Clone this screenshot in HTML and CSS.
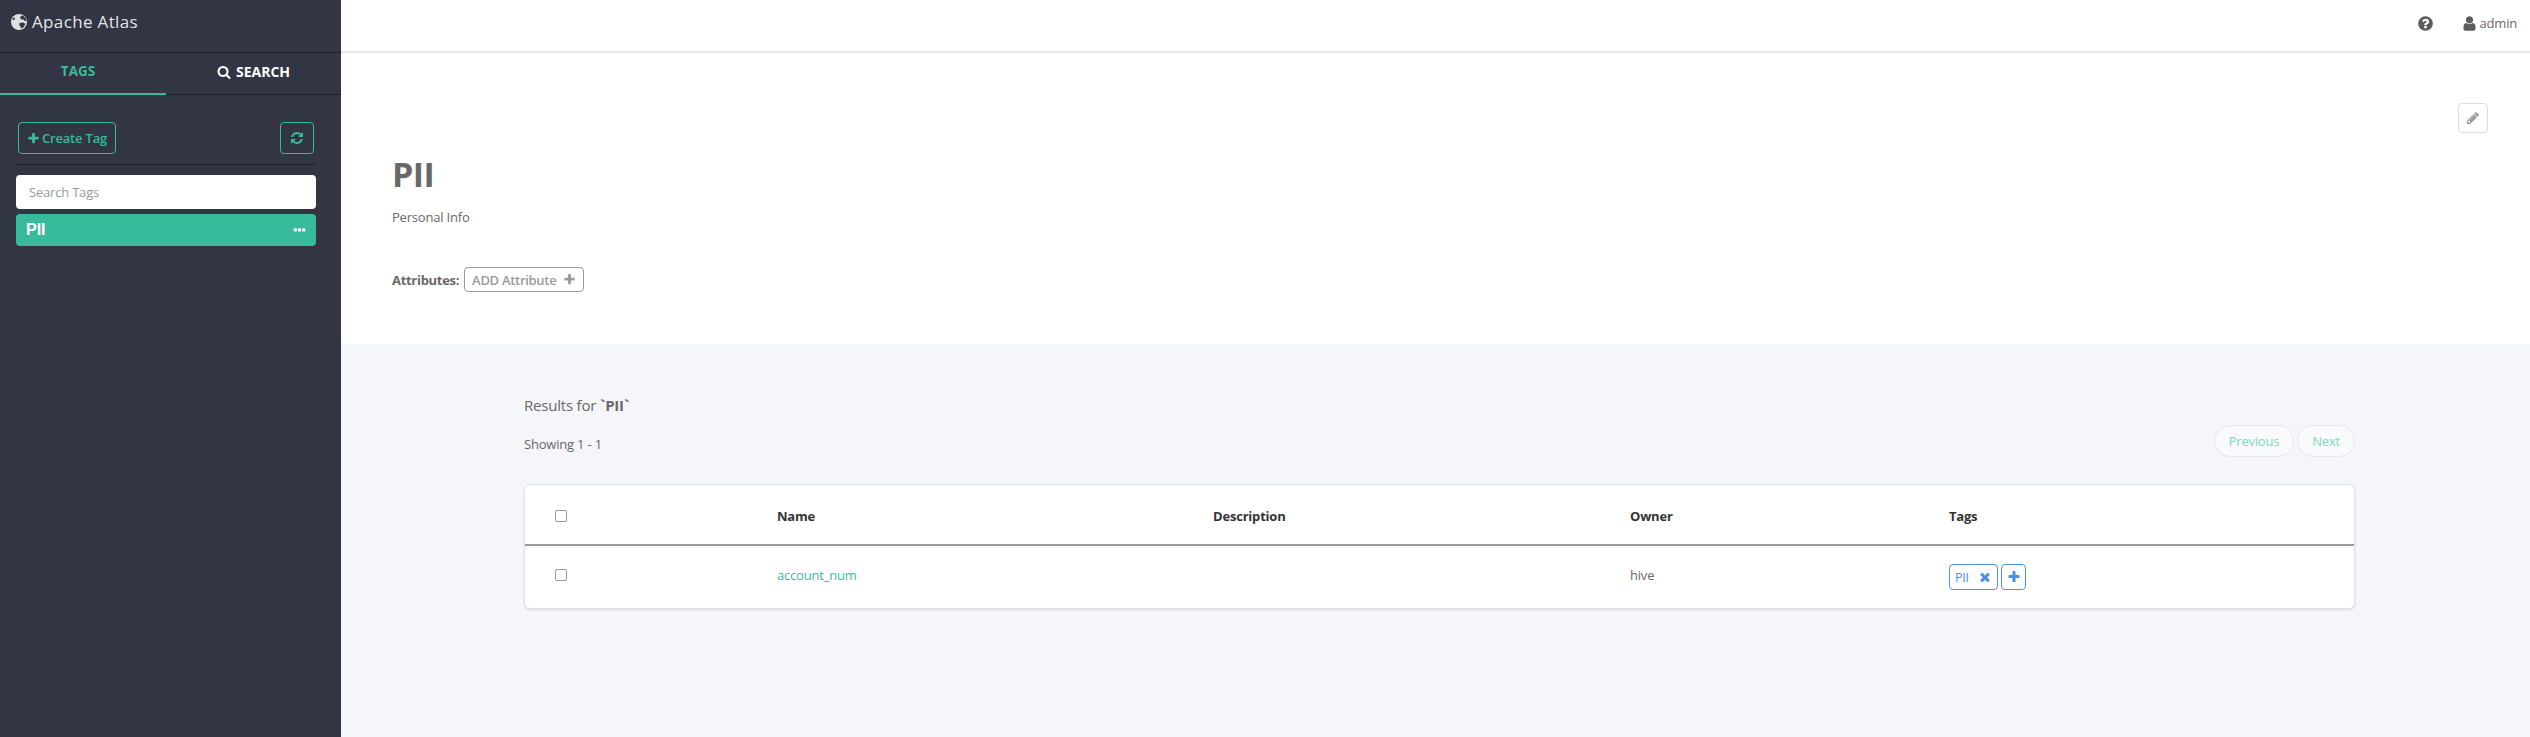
FILE: index.html
```html
<!DOCTYPE html>
<html lang="en">
<head>
  <meta charset="UTF-8">
  <title>Apache Atlas</title>
  <link rel="stylesheet" href="styles.css">
</head>
<body>
  <svg class="defs" width="0" height="0">
    <symbol id="i-search" viewBox="0 0 1792 1792"><path d="M1216 832q0-185-131.5-316.5t-316.5-131.5-316.5 131.5-131.5 316.5 131.5 316.5 316.5 131.5 316.5-131.5 131.5-316.5zm512 832q0 52-38 90t-90 38q-54 0-90-38l-343-342q-179 124-399 124-143 0-273.5-55.5t-225-150-150-225-55.5-273.5 55.5-273.5 150-225 225-150 273.5-55.5 273.5 55.5 225 150 150 225 55.5 273.5q0 220-124 399l343 343q37 37 37 90z"/></symbol>
    <symbol id="i-plus" viewBox="0 0 1792 1792"><path d="M1600 736v192q0 40-28 68t-68 28h-416v416q0 40-28 68t-68 28h-192q-40 0-68-28t-28-68v-416h-416q-40 0-68-28t-28-68v-192q0-40 28-68t68-28h416v-416q0-40 28-68t68-28h192q40 0 68 28t28 68v416h416q40 0 68 28t28 68z"/></symbol>
    <symbol id="i-times" viewBox="0 0 1792 1792"><path d="M1490 1322q0 40-28 68l-136 136q-28 28-68 28t-68-28l-294-294-294 294q-28 28-68 28t-68-28l-136-136q-28-28-28-68t28-68l294-294-294-294q-28-28-28-68t28-68l136-136q28-28 68-28t68 28l294 294 294-294q28-28 68-28t68 28l136 136q28 28 28 68t-28 68l-294 294 294 294q28 28 28 68z"/></symbol>
  </svg>

  <div class="app">
    <!-- sidebar -->
    <aside class="sidebar">
      <div class="brand">
        <svg class="globe" viewBox="0 0 16 16">
          <circle cx="8" cy="8" r="8" fill="#dfdfe2"/>
          <path d="M9.500 2.500l2.500-.9 2.600 2.600 1 3-2-.4-1.600-1.600-2 .2-.8-1.600zM8.600 9l3.400-.6 2.400 1.400-1.600 3.200-2.800 1.600-.8-2.600-1-1.200zM1 5l2.400-1.800.6 1.600-1.200 1.400z" fill="#323544"/>
        </svg>
        <span>Apache Atlas</span>
      </div>
      <nav class="tabs">
        <a class="tab active">TAGS</a>
        <a class="tab"><svg class="ico"><use href="#i-search"/></svg> SEARCH</a>
      </nav>
      <div class="side-body">
        <div class="side-actions">
          <button class="btn-outline"><svg class="ico"><use href="#i-plus"/></svg>Create Tag</button>
          <button class="btn-outline btn-refresh">
            <svg class="ico" viewBox="0 0 1792 1792"><path d="M1639 1056q0 5-1 7-64 268-268 434.5t-478 166.5q-146 0-282.5-55t-243.500-157l-129 129q-19 19-45 19t-45-19-19-45v-448q0-26 19-45t45-19h448q26 0 45 19t19 45-19 45l-137 137q71 66 161 102t187 36q134 0 250-65t186-179q11-17 53-117 8-23 30-23h192q13 0 22.500 9.500t9.500 22.500zm25-800v448q0 26-19 45t-45 19h-448q-26 0-45-19t-19-45 19-45l138-138q-148-137-349-137-134 0-250 65t-186 179q-11 17-53 117-8 23-30 23h-199q-13 0-22.500-9.500t-9.500-22.500v-7q65-268 270-434.500t480-166.500q146 0 284 55.500t245 156.500l130-129q19-19 45-19t45 19 19 45z"/></svg>
          </button>
        </div>
        <input class="side-search" type="text" placeholder="Search Tags">
        <div class="tag-row">
          <span>PII</span>
          <svg class="dots" viewBox="0 0 1792 1792"><path d="M576 736v192q0 40-28 68t-68 28h-192q-40 0-68-28t-28-68v-192q0-40 28-68t68-28h192q40 0 68 28t28 68zm512 0v192q0 40-28 68t-68 28h-192q-40 0-68-28t-28-68v-192q0-40 28-68t68-28h192q40 0 68 28t28 68zm512 0v192q0 40-28 68t-68 28h-192q-40 0-68-28t-28-68v-192q0-40 28-68t68-28h192q40 0 68 28t28 68z"/></svg>
        </div>
      </div>
    </aside>

    <main class="main">
      <header class="topbar">
        <svg class="top-ico" viewBox="0 0 1792 1792"><path d="M1024 1376v-192q0-14-9-23t-23-9h-192q-14 0-23 9t-9 23v192q0 14 9 23t23 9h192q14 0 23-9t9-23zm256-672q0-88-55.500-163t-138.500-116-170-41q-243 0-371 213-15 24 8 42l132 100q7 6 19 6 16 0 25-12 53-68 86-92 34-24 86-24 48 0 85.500 26t37.500 59q0 38-20 61t-68 45q-63 28-115.500 86.500t-52.500 125.500v36q0 14 9 23t23 9h192q14 0 23-9t9-23q0-19 21.500-49.500t54.500-49.500q32-18 49-28.500t46-35 44.500-48 28-60.500 12.500-81zm384 192q0 209-103 385.500t-279.500 279.500-385.500 103-385.500-103-279.500-279.500-103-385.500 103-385.500 279.500-279.500 385.500-103 385.500 103 279.500 279.500 103 385.500z"/></svg>
        <span class="user">
          <svg class="top-ico" viewBox="0 0 1792 1792"><path d="M1536 1399q0 109-62.500 187t-150.500 78h-854q-88 0-150.500-78t-62.500-187q0-85 8.500-160.500t31.500-152 58.500-131 94-89 134.500-34.500q131 128 313 128t313-128q76 0 134.500 34.500t94 89 58.500 131 31.500 152 8.500 160.500zm-256-887q0 159-112.500 271.500t-271.500 112.500-271.500-112.500-112.500-271.500 112.500-271.500 271.500-112.500 271.500 112.500 112.500 271.500z"/></svg>
          admin
        </span>
      </header>

      <section class="tag-detail">
        <button class="btn-edit">
          <svg viewBox="0 0 1792 1792"><path d="M491 1536l91-91-235-235-91 91v107h128v128h107zm523-928q0-22-22-22-10 0-17 7l-542 542q-7 7-7 17 0 22 22 22 10 0 17-7l542-542q7-7 7-17zm-54-192l416 416-832 832h-416v-416zm683 96q0 53-37 90l-166 166-416-416 166-165q36-38 90-38 53 0 91 38l235 234q37 39 37 91z"/></svg>
        </button>
        <h1>PII</h1>
        <p class="desc">Personal Info</p>
        <div class="attrs">
          <strong>Attributes:</strong>
          <button class="btn-attr">ADD Attribute <svg class="ico"><use href="#i-plus"/></svg></button>
        </div>
      </section>

      <section class="results">
        <h2 class="res-title">Results for <b>`PII`</b></h2>
        <div class="res-bar">
          <span>Showing 1 - 1</span>
          <div class="pager">
            <button>Previous</button>
            <button>Next</button>
          </div>
        </div>
        <div class="res-table">
          <div class="tr th">
            <div class="td-check"><i class="check"></i></div>
            <div>Name</div>
            <div>Description</div>
            <div>Owner</div>
            <div>Tags</div>
          </div>
          <div class="tr row">
            <div class="td-check"><i class="check"></i></div>
            <div><a class="link">account_num</a></div>
            <div></div>
            <div>hive</div>
            <div class="tags">
              <span class="chip">PII <svg class="ico"><use href="#i-times"/></svg></span>
              <span class="chip chip-add"><svg class="ico"><use href="#i-plus"/></svg></span>
            </div>
          </div>
        </div>
      </section>
    </main>
  </div>
</body>
</html>
```

FILE: styles.css
```css
:root {
  --dark: #323544;
  --line: #1f2029;
  --green: #38bb9b;
  --blue: #4a90e2;
  --text: #686868;
}
* {box-sizing: border-box;margin:0;padding:0;}
html,body {height:100%;}
body {font-family:"Open Sans",sans-serif;font-size:13px;letter-spacing:-0.2px;color:var(--text);background:#f5f6fa;overflow:hidden;}
button {font-family:inherit;letter-spacing:inherit;background:none;cursor:pointer;}
.defs {position:absolute;}
.ico {width:1em;height:1em;fill:currentColor;}

.app {display:flex;height:737px;}

/* sidebar */
.sidebar {width:341px;flex:none;background:var(--dark);color:#fff;}
.brand {height:53px;padding:0 0 9px 11px;display:flex;align-items:center;gap:5px;border-bottom:1px solid var(--line);font-size:17px;font-weight:500;letter-spacing:0.35px;color:#e4e4e6;}
.globe {width:16px;height:16px;}
.tabs {display:flex;height:42px;border-bottom:1px solid var(--line);}
.tab {flex:1;display:flex;align-items:center;justify-content:center;gap:5px;font-size:14px;font-weight:700;letter-spacing:0;padding-bottom:4px;}
.tab:first-child {flex:none;width:166px;}
.tab.active {color:var(--green);font-size:13.500px;padding-right:10px;border-bottom:2px solid var(--green);margin-bottom:-1px;}
.side-body {padding:27px 25px 0 16px;}
.side-actions {display:flex;justify-content:space-between;padding:0 2px 10px 2px;margin:0 -9px 10px 0;border-bottom:1px solid var(--line);width:300px;}
.btn-outline {height:32px;padding:0 8px;border:1px solid var(--green);border-radius:4px;color:var(--green);font-size:13px;font-weight:600;display:flex;align-items:center;gap:2px;}
.btn-refresh {width:34px;padding:0;justify-content:center;font-size:14px;}
.side-search {display:block;width:300px;height:34px;border:0;border-radius:4px;padding:0 13px;font-family:inherit;font-size:13px;letter-spacing:inherit;}
.side-search::placeholder {color:#999;}
.tag-row {width:300px;height:32px;margin-top:5px;border-radius:4px;background:var(--green);padding:0 9px 0 10px;display:flex;align-items:center;justify-content:space-between;font-family:"Liberation Sans",sans-serif;font-size:16px;font-weight:700;letter-spacing:0;}
.dots {width:15px;height:15px;fill:#fff;}

/* main */
.main {flex:1;min-width:0;}
.topbar {height:53px;background:#fff;border-bottom:2px solid #e6e6ec;display:flex;align-items:center;justify-content:flex-end;gap:27px;padding:0 13px 5px 0;font-size:13px;}
.top-ico {width:17px;height:17px;fill:#5c5c5c;}
.user {display:flex;align-items:center;gap:2px;}

.tag-detail {position:relative;height:291px;background:#fff;padding:97px 0 0 51px;}
.tag-detail h1 {font-size:34px;line-height:48px;font-weight:700;letter-spacing:-0.5px;color:var(--text);}
.desc {margin-top:10px;font-size:13px;}
.attrs {margin-top:41px;display:flex;align-items:center;gap:5px;}
.attrs strong {font-weight:700;letter-spacing:-0.3px;}
.btn-attr {height:25px;padding:0 7px;border:1px solid #999;border-radius:4px;color:#999;font-size:13px;font-weight:600;letter-spacing:-0.3px;display:flex;align-items:center;gap:7px;}
.btn-edit {position:absolute;top:50px;right:42px;width:30px;height:30px;border:1px solid #ddd;border-radius:4px;display:flex;align-items:center;justify-content:center;}
.btn-edit svg {width:14px;height:14px;fill:#999;}

.results {padding:49px 175px 0 183px;}
.res-title {font-size:15px;font-weight:400;line-height:24px;}
.res-bar {display:flex;justify-content:space-between;margin-top:17px;height:50px;line-height:20px;}
.pager {display:flex;gap:3px;margin-top:-9px;height:32px;}
.pager button {padding:0 14px;border:1px solid #e6e6ec;border-radius:16px;background:#f9fafc;color:#82d6c0;font-size:13px;}
.res-table {background:#fff;border:1px solid #e2e2e6;border-radius:6px;box-shadow:0 1px 2px rgba(0,0,0,0.12);}
.tr {display:grid;grid-template-columns:252px 436px 417px 319px 1fr;align-items:center;height:62px;}
.th {height:61px;padding-top:2px;border-bottom:2px solid #999;font-weight:700;color:#333;}
.row {padding-bottom:5px;}
.td-check {padding-left:30px;}
.check {display:block;width:12px;height:12px;border:1px solid #999;border-radius:2px;background:#fff;}
.link {color:var(--green);}
.tags {display:flex;gap:3px;margin-top:5px;}
.chip {height:26px;width:49px;padding:0 5px;border:1px solid var(--blue);border-radius:4px;color:var(--blue);display:flex;align-items:center;justify-content:space-between;font-size:12.500px;}
.chip .ico {font-size:14px;}
.chip-add {width:25px;padding:0;justify-content:center;}
```
